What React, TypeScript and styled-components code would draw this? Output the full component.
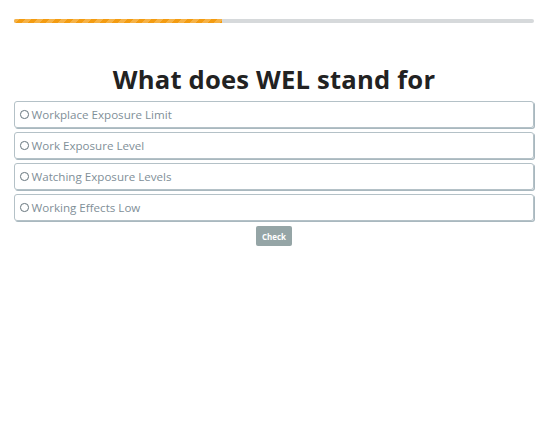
import React from "react";
import styled, { createGlobalStyle } from "styled-components";

const Global = createGlobalStyle`
  html, body { margin: 0; padding: 0; background: #ffffff; }
  body { font-family: "Open Sans", "DejaVu Sans", sans-serif; }
`;

const Page = styled.div`
  width: 520px;
  padding: 19px 0 0 14px;
  display: flex;
  flex-direction: column;
`;

const Track = styled.div`
  height: 4px;
  background: #d6d9db;
  border-radius: 2px;
  overflow: hidden;
  display: flex;
`;

const Fill = styled.div`
  height: 100%;
  background-color: #f39c12;
  background-image: linear-gradient(
    135deg,
    rgba(255, 255, 255, 0.22) 25%,
    transparent 25%,
    transparent 50%,
    rgba(255, 255, 255, 0.22) 50%,
    rgba(255, 255, 255, 0.22) 75%,
    transparent 75%,
    transparent
  );
  background-size: 12px 12px;
`;

const Title = styled.h1`
  margin: 40px 0 4px;
  text-align: center;
  font-family: "Open Sans", sans-serif;
  font-weight: 700;
  font-size: 25.6px;
  line-height: 34px;
  color: #222222;
  letter-spacing: 0.2px;
`;

const Options = styled.div`
  display: flex;
  flex-direction: column;
  gap: 4px;
`;

const Option = styled.label`
  display: flex;
  align-items: center;
  gap: 3px;
  height: 25px;
  padding: 0 5px;
  border: 1px solid #b4c1c7;
  border-radius: 3px;
  box-shadow: 1px 1px 0 #a9b8bf;
  color: #7f8f98;
  font-size: 11.6px;
  cursor: pointer;
`;

const Radio = styled.span`
  width: 6.5px;
  height: 6.5px;
  border: 1.2px solid #66757d;
  border-radius: 50%;
  flex: none;
`;

const Actions = styled.div`
  display: flex;
  justify-content: center;
  padding-top: 5px;
`;

const CheckButton = styled.button`
  width: 36px;
  height: 20px;
  padding: 0;
  border: none;
  border-radius: 2px;
  background: #95a5a6;
  color: #ffffff;
  font-family: "Open Sans", sans-serif;
  font-size: 8px;
  font-weight: 700;
`;

const answers = [
  "Workplace Exposure Limit",
  "Work Exposure Level",
  "Watching Exposure Levels",
  "Working Effects Low",
];

export default function App() {
  return (
    <>
      <Global />
      <Page>
        <Track>
          <Fill style={{ width: `${(208 / 520) * 100}%` }} />
        </Track>
        <Title>What does WEL stand for</Title>
        <Options>
          {answers.map((a) => (
            <Option key={a}>
              <Radio />
              {a}
            </Option>
          ))}
        </Options>
        <Actions>
          <CheckButton>Check</CheckButton>
        </Actions>
      </Page>
    </>
  );
}
